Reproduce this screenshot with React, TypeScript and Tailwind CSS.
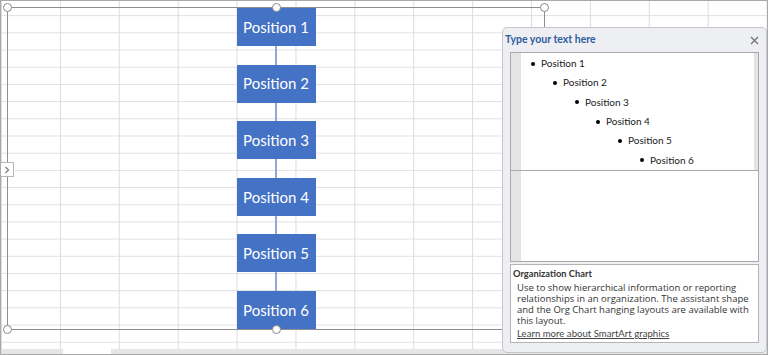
import React from "react";

const boxes = ["Position 1", "Position 2", "Position 3", "Position 4", "Position 5", "Position 6"];

const items: { label: string; pad: string }[] = [
  { label: "Position 1", pad: "pl-[10px]" },
  { label: "Position 2", pad: "pl-[32px]" },
  { label: "Position 3", pad: "pl-[54px]" },
  { label: "Position 4", pad: "pl-[75px]" },
  { label: "Position 5", pad: "pl-[97px]" },
  { label: "Position 6", pad: "pl-[119px]" },
];

const desc = [
  "Use to show hierarchical information or reporting",
  "relationships in an organization. The assistant shape",
  "and the Org Chart hanging layouts are available with",
  "this layout.",
];

function Handle({ pos }: { pos: string }) {
  return (
    <div
      className={`absolute w-[9px] h-[9px] rounded-full border-[1.5px] border-[#8a8a8a] bg-white ${pos}`}
    />
  );
}

export default function App() {
  return (
    <div className="w-[768px] h-[355px] flex flex-col overflow-hidden bg-white border border-[#a9a9a9] font-['Lato',sans-serif]">
      <div className="relative flex-1 [background-image:linear-gradient(to_right,#dcdcdc_1px,transparent_1px),linear-gradient(to_bottom,#e0e0e0_1px,transparent_1px)] [background-size:58.9px_17.2px] [background-position:0px_-3px]">
        {/* selection frame with org chart */}
        <div className="absolute left-[6px] top-[6px] w-[538px] h-[323px] border border-[#8e8e8e] flex flex-col items-center">
          {boxes.map((b, i) => (
            <React.Fragment key={b}>
              {i > 0 && <div className="flex-1 w-[2px] bg-[#93a8d0]" />}
              <div className="w-[79px] h-[38px] shrink-0 bg-[#4472c4] text-white text-[15px] flex items-center justify-center">
                {b}
              </div>
            </React.Fragment>
          ))}
        </div>
        <Handle pos="left-[2px] top-[2px]" />
        <Handle pos="left-[271px] top-[2px]" />
        <Handle pos="left-[539px] top-[2px]" />
        <Handle pos="left-[2px] top-[324px]" />
        <Handle pos="left-[271px] top-[324px]" />

        {/* expand tab */}
        <div className="absolute left-[-1px] top-[161px] w-[14px] h-[15px] bg-white border border-[#b8b8b8] flex items-center justify-center">
          <svg width="6" height="8" viewBox="0 0 6 8">
            <path d="M1.5 1 L4.5 4 L1.5 7" fill="none" stroke="#7a7a7a" strokeWidth="1.2" />
          </svg>
        </div>

        {/* text pane */}
        <div className="absolute left-[501px] top-[26px] w-[265px] h-[326px] flex flex-col rounded-[5px] border border-[#c4c6cb] bg-[#eeeff3]">
          <div className="h-[24px] shrink-0 flex items-center justify-between pl-[2px] pr-[7px]">
            <span className="text-[10.5px] font-bold text-[#2e5c9e]">Type your text here</span>
            <svg width="9" height="9" viewBox="0 0 9 9">
              <path d="M1 1 L8 8 M8 1 L1 8" stroke="#707070" strokeWidth="1.2" />
            </svg>
          </div>
          <div className="mx-[7px] h-[210px] shrink-0 flex flex-col border border-[#a9a9a9] bg-white">
            <div className="h-[118px] shrink-0 flex border-b border-[#a9a9a9]">
              <div className="w-[10px] bg-[#e4e4e4]" />
              <div className="flex-1 flex flex-col pt-[1px] text-[10px] text-[#1a1a1a]">
                {items.map((it) => (
                  <div key={it.label} className={`h-[19.4px] flex items-center gap-[6px] ${it.pad}`}>
                    <span className="w-[4px] h-[4px] rounded-full bg-black" />
                    <span>{it.label}</span>
                  </div>
                ))}
              </div>
              <div className="w-[4px] bg-[#e4e4e4]" />
            </div>
            <div className="flex-1 flex">
              <div className="w-[10px] bg-[#e4e4e4]" />
              <div className="flex-1" />
            </div>
          </div>
          <div className="mx-[7px] mt-[2px] h-[79px] shrink-0 border border-[#b4b4b4] bg-white pl-[2px] pt-[2px] text-[#333333] whitespace-nowrap">
            <div className="font-bold text-[9.3px] h-[13px] flex items-center">Organization Chart</div>
            <div className="pl-[4px] pt-[2px] flex flex-col font-['Open_Sans',sans-serif] text-[9.5px] leading-[11px]">
              {desc.map((l) => (
                <div key={l} className="h-[11px]">
                  {l}
                </div>
              ))}
            </div>
            <div className="pl-[4px] pt-[2px] underline text-[#444444] text-[9.6px] leading-[11px]">
              Learn more about SmartArt graphics
            </div>
          </div>
        </div>
      </div>
      <div className="h-[5px] shrink-0 flex">
        <div className="w-[62px] bg-[#e6e6e6]" />
        <div className="w-[48px] bg-white" />
        <div className="flex-1 bg-[#e6e6e6]" />
      </div>
    </div>
  );
}
